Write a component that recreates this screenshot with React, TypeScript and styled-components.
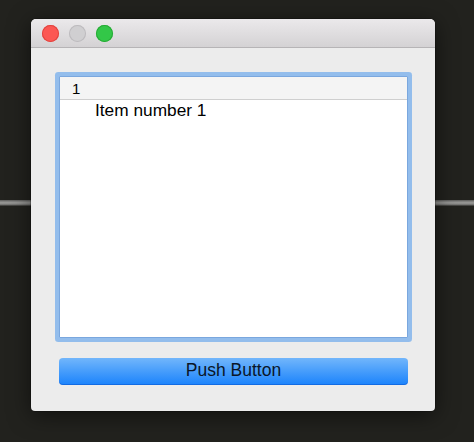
import React from "react";
import styled, { createGlobalStyle } from "styled-components";

const Global = createGlobalStyle`
  html, body {
    margin: 0;
    padding: 0;
  }
  body {
    width: 474px;
    height: 442px;
    overflow: hidden;
    font-family: "Liberation Sans", Arial, sans-serif;
    background:
      linear-gradient(
        to bottom,
        transparent 0,
        transparent 200px,
        #5a5a58 200px,
        #8e8e8c 202px,
        #9a9a98 203px,
        #6c6c6a 205px,
        transparent 206px
      ),
      #22221e;
  }
`;

const Stage = styled.div`
  padding: 19px 0 0 31px;
`;

const Window = styled.div`
  width: 404px;
  height: 392px;
  display: flex;
  flex-direction: column;
  background: #ececec;
  border-radius: 5px 5px 4px 4px;
  box-shadow: 0 4px 22px rgba(0, 0, 0, 0.55), 0 0 0 0.5px rgba(0, 0, 0, 0.4);
  overflow: hidden;
`;

const TitleBar = styled.div`
  height: 28px;
  flex: none;
  display: flex;
  align-items: center;
  gap: 10px;
  padding-left: 11px;
  background: linear-gradient(to bottom, #ebe9eb, #d4d2d4);
  border-bottom: 1px solid #b6b4b6;
`;

const Light = styled.span<{ $color: string; $ring: string }>`
  width: 17px;
  height: 17px;
  border-radius: 50%;
  background: ${(p) => p.$color};
  box-shadow: inset 0 0 0 1px ${(p) => p.$ring};
`;

const Body = styled.div`
  flex: 1;
  display: flex;
  flex-direction: column;
  padding: 28px 27px 26px 28px;
  gap: 20px;
`;

const List = styled.div`
  height: 262px;
  flex: none;
  box-sizing: border-box;
  background: #ffffff;
  border: 1px solid #7aa7de;
  box-shadow: 0 0 0 4px #93bdec;
  border-radius: 1px;
  display: flex;
  flex-direction: column;
`;

const Header = styled.div`
  height: 22px;
  flex: none;
  display: flex;
  align-items: center;
  padding-left: 12px;
  background: #f4f4f4;
  border-bottom: 1px solid #cfcfcf;
  font-size: 15px;
  color: #000;
`;

const Row = styled.div`
  padding-left: 35px;
  font-size: 17.3px;
  line-height: 21px;
  color: #000;
`;

const PushButton = styled.button`
  height: 27px;
  flex: none;
  border: none;
  border-radius: 4px;
  background: linear-gradient(to bottom, #72b6fb 0%, #4a9ffb 45%, #1b83fc 100%);
  box-shadow: inset 0 -1px 0 rgba(0, 60, 180, 0.35);
  font-family: "Liberation Sans", Arial, sans-serif;
  font-size: 17.5px;
  color: #0a1628;
  padding: 0 0 3px;
  cursor: default;
`;

export default function App() {
  return (
    <>
      <Global />
      <Stage>
        <Window>
          <TitleBar>
            <Light $color="#fc5753" $ring="#e0443f" />
            <Light $color="#d0cfd1" $ring="#bdbbbe" />
            <Light $color="#33c748" $ring="#27aa36" />
          </TitleBar>
          <Body>
            <List>
              <Header>1</Header>
              <Row>Item number 1</Row>
            </List>
            <PushButton>Push Button</PushButton>
          </Body>
        </Window>
      </Stage>
    </>
  );
}
